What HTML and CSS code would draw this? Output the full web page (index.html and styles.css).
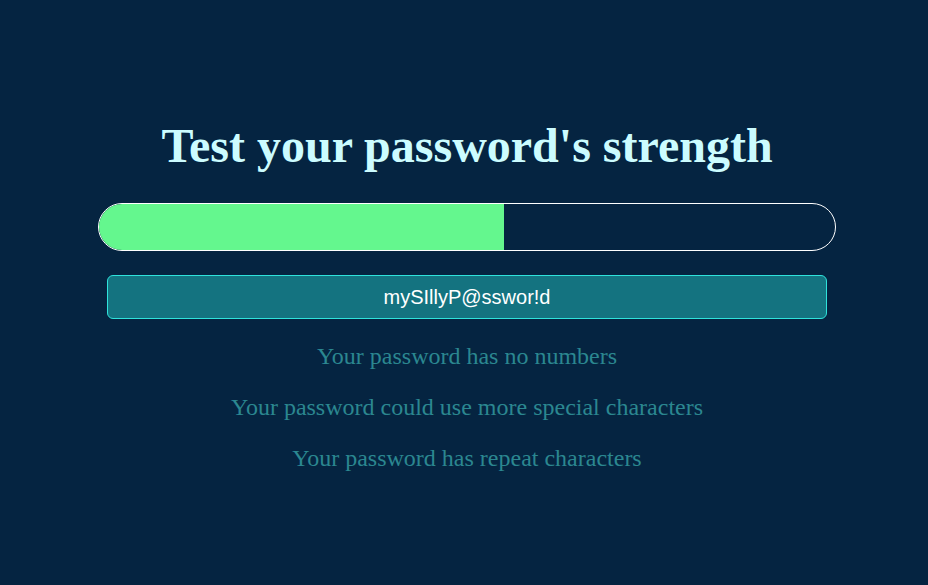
FILE: index.html
```html
<!DOCTYPE html>
<html lang="en">
<head>
    <meta charset="UTF-8">
    <meta name="viewport" content="width=device-width, initial-scale=1.0">
    <title>Password Strength</title>
    <link rel="stylesheet" href="styles.css">
</head>
<body>
    <div class="container">
        <h1 class="title">Test your password's strength</h1>

        <div class="strength-bar">
            <div class="strength-fill" style="width: 55%"></div>
        </div>

        <input type="text" class="password-input" value="mySIllyP@sswor!d">

        <div class="reasons">
            <p class="reason">Your password has no numbers</p>
            <p class="reason">Your password could use more special characters</p>
            <p class="reason">Your password has repeat characters</p>
        </div>
    </div>
</body>
</html>
```

FILE: styles.css
```css
:root {
    --bg: #052441;
    --title: #ccfcff;
    --fill: #64f78e;
    --input-bg: #147380;
    --input-border: #2fe3dc;
    --reason: #2b8790;
}

* {
    margin: 0;
    padding: 0;
    box-sizing: border-box;
}

body {
    background-color: var(--bg);
    font-family: "Liberation Serif", "Times New Roman", serif;
    min-height: 100vh;
}

.container {
    display: flex;
    flex-direction: column;
    align-items: center;
    padding: 118px 0 0 6px;
}

.title {
    color: var(--title);
    font-size: 48px;
    font-weight: 700;
    line-height: 56px;
    margin-bottom: 29px;
}

.strength-bar {
    width: 738px;
    height: 48px;
    border: 1px solid #ffffff;
    border-radius: 24px;
    overflow: hidden;
}

.strength-fill {
    height: 100%;
    background-color: var(--fill);
}

.password-input {
    width: 720px;
    height: 44px;
    margin-top: 24px;
    background-color: var(--input-bg);
    border: 1px solid var(--input-border);
    border-radius: 6px;
    color: #ffffff;
    font-family: "Liberation Sans", Arial, sans-serif;
    font-size: 20px;
    text-align: center;
    outline: none;
}

.reasons {
    display: flex;
    flex-direction: column;
    align-items: center;
    gap: 24px;
    margin-top: 24px;
}

.reason {
    color: var(--reason);
    font-size: 24px;
    line-height: 27px;
}
```
